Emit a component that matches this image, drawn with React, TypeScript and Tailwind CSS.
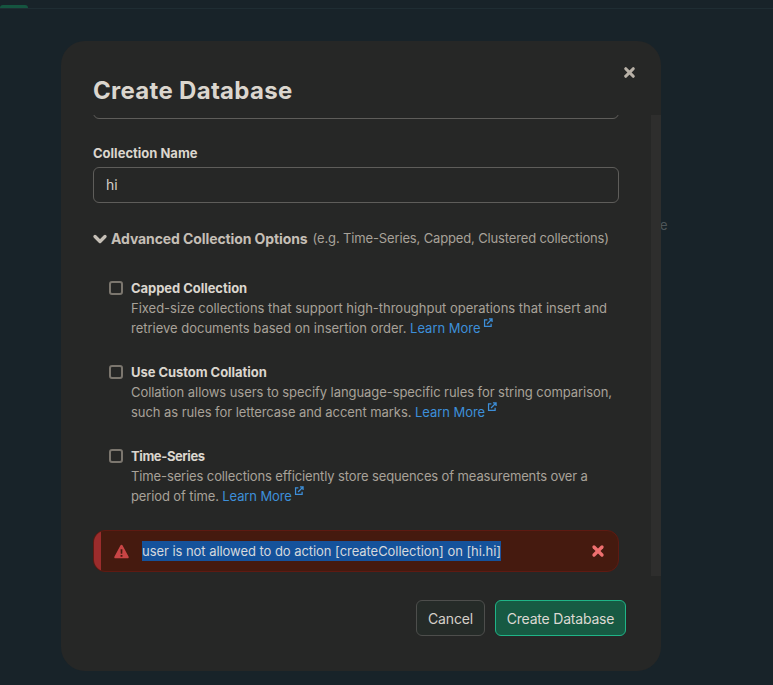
import { ChevronDown, X } from 'lucide-react';

const font = "font-['Inter','Liberation_Sans',sans-serif]";

function ExternalMark() {
  return (
    <svg viewBox="0 0 16 16" className="ml-[2px] inline-block h-[10px] w-[10px] align-[5px] text-[#3d8fd9]" fill="none" stroke="currentColor" strokeWidth="2">
      <path d="M7 3H2.5v10.5H13V9" />
      <path d="M6.5 9.5 14 2M9.5 1.5H14.5V6.5" />
    </svg>
  );
}

function WarningMark() {
  return (
    <svg viewBox="0 0 16 16" className="ml-[13px] h-[15px] w-[15px] shrink-0 text-[#c94545]">
      <path
        fill="currentColor"
        fillRule="evenodd"
        d="M8 .8c.5 0 .9.3 1.2.7l6.4 12c.4.8-.1 1.7-1 1.7H1.4c-.9 0-1.4-.9-1-1.7l6.4-12C7.1 1.1 7.500.8 8 .8ZM7 5.500l.2 5h1.600l.2-5H7Zm0 6.300v1.700h2v-1.700H7Z"
      />
    </svg>
  );
}

function CollectionOption({
  title,
  lines,
  titleClass = 'tracking-[-0.05px]',
  textClass = 'tracking-[-0.05px]',
}: {
  title: string;
  lines: string[];
  titleClass?: string;
  textClass?: string;
}) {
  return (
    <div className="flex pl-4">
      <div className="mt-[3px] h-[14px] w-[14px] shrink-0 rounded-[3px] border-2 border-[#7b766e]" />
      <div className="ml-2">
        <div className={`text-[13px] leading-5 font-bold text-[#dbd6ce] ${titleClass}`}>{title}</div>
        <p className={`text-[13px] leading-5 whitespace-nowrap text-[#a8a299] ${textClass}`}>
          {lines[0]}
          <br />
          {lines[1]}{' '}
          <span className="text-[#3d8fd9]">
            Learn More
            <ExternalMark />
          </span>
        </p>
      </div>
    </div>
  );
}

export default function App() {
  return (
    <div className={`${font} relative h-[685px] w-[773px] overflow-hidden bg-[#182329]`}>
      <div className="flex h-[9px] items-end border-b border-[#1f2d33]">
        <div className="h-[3px] w-[28px] rounded-t-sm bg-[#155540]" />
      </div>
      <span className="absolute top-[216px] left-[660px] text-[13px] text-[#4d5559]">e</span>

      <div className="relative mt-[32px] ml-[61px] flex h-[630px] w-[600px] flex-col rounded-3xl bg-[#262726]">
        <button className="absolute top-[24px] right-[24px] text-[#b8b1a7]">
          <X size={15} strokeWidth={5} />
        </button>

        <h1 className="px-8 pt-[34px] text-[24px] leading-8 font-bold tracking-[0.3px] text-[#dbd6ce]">Create Database</h1>

        <div className="mt-[8px] flex h-[461px] overflow-hidden">
          <div className="w-[590px] pr-[32px] pl-8">
            <div className="-mt-[32px] h-[36px] rounded-md border border-[#5e5d5a]" />

            <label className="mt-[24px] block text-[13px] leading-5 font-bold tracking-[0px] text-[#dbd6ce]">Collection Name</label>
            <div className="mt-[4px] flex h-[36px] items-center rounded-md border border-[#5e5d5a] px-3 pb-[2px] text-[14px] text-[#d5d0c9]">hi</div>

            <div className="mt-[26px] flex h-5 items-center whitespace-nowrap">
              <ChevronDown size={20} strokeWidth={4} className="-ml-[3px] text-[#c5bfb6]" />
              <span className="mb-[2px] ml-[1px] text-[14px] font-bold tracking-[-0.1px] text-[#c5bfb6]">Advanced Collection Options</span>
              <span className="ml-[5px] text-[13px] tracking-[-0.14px] text-[#a8a299]">(e.g. Time-Series, Capped, Clustered collections)</span>
            </div>

            <div className="mt-[29px] flex flex-col gap-[24px]">
              <CollectionOption
                title="Capped Collection"
                lines={['Fixed-size collections that support high-throughput operations that insert and', 'retrieve documents based on insertion order.']}
                textClass="tracking-[-0.01px]"
              />
              <CollectionOption
                title="Use Custom Collation"
                lines={['Collation allows users to specify language-specific rules for string comparison,', 'such as rules for lettercase and accent marks.']}
                textClass="tracking-[-0.06px]"
              />
              <CollectionOption
                title="Time-Series"
                lines={['Time-series collections efficiently store sequences of measurements over a', 'period of time.']}
                titleClass="tracking-[-0.4px]"
                textClass="tracking-[-0.12px]"
              />
            </div>

            <div className="mt-[24px] flex h-[42px] items-center overflow-hidden rounded-xl border border-[#5e1a12] bg-[#451a0f]">
              <div className="h-full w-[7px] shrink-0 bg-[#9b2c2c]" />
              <WarningMark />
              <span className="ml-[13px] bg-[#15529b] text-[13px] leading-5 tracking-[-0.05px] whitespace-nowrap text-[#d5d9dd]">
                user is not allowed to do action [createCollection] on [hi.hi]
              </span>
              <X size={16} strokeWidth={5} className="mr-[12px] ml-auto shrink-0 text-[#ef7070]" />
            </div>
          </div>
          <div className="w-[10px] bg-[#2e2e2d]" />
        </div>

        <div className="mt-[24px] flex justify-end gap-[10px] pr-[35px]">
          <button className="h-[36px] w-[69px] rounded-md border border-[#4d4e4c] bg-[#252b28] pt-px text-[14px] tracking-[-0.15px] text-[#d5d0c9]">Cancel</button>
          <button className="h-[36px] w-[131px] rounded-md border border-[#1fb487] bg-[#175a43] pt-px text-[14px] tracking-[-0.2px] text-[#dcd8d2]">Create Database</button>
        </div>
      </div>
    </div>
  );
}
